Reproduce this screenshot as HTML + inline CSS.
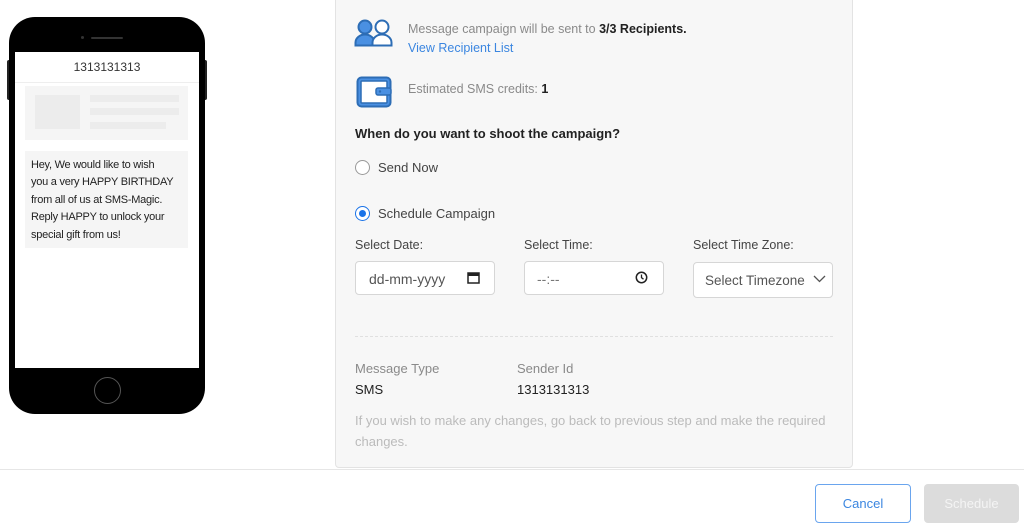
<!DOCTYPE html>
<html><head><meta charset="utf-8"><style>
*{box-sizing:border-box;margin:0;padding:0}
body{width:1024px;height:529px;background:#fff;font-family:"Liberation Sans",sans-serif;position:relative;overflow:hidden;color:#333}
.a{position:absolute}
.panel{left:335px;top:-2px;width:518px;height:470px;background:#f7f7f7;border:1px solid #e3e3e3;border-radius:0 0 4px 4px}
.g{color:#8a8a8a}
.box{position:absolute;height:34px;background:#fff;border:1px solid #d6d6d6;border-radius:4px;font-size:14px;color:#555}
.radio{position:absolute;width:15px;height:15px;border-radius:50%;border:1px solid #999;background:#fff}
</style></head><body>
<!-- phone -->
<div class="a" style="left:7px;top:60px;width:200px;height:40px;background:#222;border-radius:2px"></div>
<div class="a" style="left:9px;top:17px;width:196px;height:397px;background:#000;border-radius:26px"></div>
<div class="a" style="left:91px;top:37px;width:32px;height:2px;background:#333;border-radius:1px"></div>
<div class="a" style="left:81px;top:36px;width:3px;height:3px;background:#333;border-radius:50%"></div>
<div class="a" style="left:15px;top:52px;width:184px;height:316px;background:#fff"></div>
<div class="a" style="left:15px;top:52px;width:184px;height:31px;border-bottom:1px solid #eee;text-align:center;font-size:12px;line-height:31px;color:#333">1313131313</div>
<div class="a" style="left:25px;top:86px;width:163px;height:54px;background:#f5f5f5"></div>
<div class="a" style="left:35px;top:95px;width:45px;height:34px;background:#ececec"></div>
<div class="a" style="left:90px;top:95px;width:89px;height:7px;background:#ececec"></div>
<div class="a" style="left:90px;top:108px;width:89px;height:7px;background:#ececec"></div>
<div class="a" style="left:90px;top:122px;width:76px;height:7px;background:#ececec"></div>
<div class="a" style="left:25px;top:151px;width:163px;height:97px;background:#f5f5f5;padding:6px 4px 6px 6px;font-size:11px;letter-spacing:-0.25px;line-height:17.4px;color:#222;white-space:nowrap">Hey, We would like to wish<br>you a very HAPPY BIRTHDAY<br>from all of us at SMS-Magic.<br>Reply HAPPY to unlock your<br>special gift from us!</div>
<div class="a" style="left:94px;top:377px;width:27px;height:27px;border:1px solid #555;border-radius:50%"></div>
<!-- panel -->
<div class="a panel"></div>
<svg class="a" style="left:354px;top:19px" width="40" height="28" viewBox="0 0 40 28">
<path d="M1.5 26.5 v-3 a9.5 8 0 0 1 19 0 v3z" fill="#4a90e2" stroke="#2d6db5" stroke-width="2"/>
<circle cx="11" cy="8" r="6.5" fill="#4a90e2" stroke="#2d6db5" stroke-width="2"/>
<path d="M18.5 26.5 v-3 a9.5 8 0 0 1 19 0 v3z" fill="#fff" stroke="#2d6db5" stroke-width="2"/>
<circle cx="28" cy="8" r="6.5" fill="#fff" stroke="#2d6db5" stroke-width="2"/>
</svg>
<svg class="a" style="left:356px;top:76px" width="37" height="32" viewBox="0 0 37 32">
<rect x="1.5" y="1.5" width="33" height="29" rx="4" fill="#4a90e2" stroke="#2d6db5" stroke-width="2"/>
<rect x="5" y="5" width="26" height="22" rx="1" fill="#fff" stroke="#2d6db5" stroke-width="1.5"/>
<rect x="20" y="12" width="15" height="7" rx="2" fill="#4a90e2" stroke="#2d6db5" stroke-width="1.5"/>
<circle cx="24" cy="15.5" r="1.2" fill="#2d6db5"/>
</svg>
<div class="a g" style="left:408px;top:22px;font-size:12.5px">Message campaign will be sent to <b style="color:#222">3/3 Recipients.</b></div>
<div class="a" style="left:408px;top:41px;font-size:12.5px;color:#3b86e0">View Recipient List</div>
<div class="a g" style="left:408px;top:82px;font-size:12.5px">Estimated SMS credits: <b style="color:#222">1</b></div>
<div class="a" style="left:355px;top:126px;font-size:13px;font-weight:bold;color:#222">When do you want to shoot the campaign?</div>
<div class="radio" style="left:355px;top:160px"></div>
<div class="a" style="left:378px;top:160px;font-size:13px;color:#444">Send Now</div>
<div class="radio" style="left:355px;top:206px;border-color:#1a73e8"></div>
<div class="a" style="left:359px;top:210px;width:7px;height:7px;border-radius:50%;background:#1a73e8"></div>
<div class="a" style="left:378px;top:206px;font-size:13px;color:#444">Schedule Campaign</div>
<div class="a" style="left:355px;top:238px;font-size:12.5px;color:#444">Select Date:</div>
<div class="a" style="left:524px;top:238px;font-size:12.5px;color:#444">Select Time:</div>
<div class="a" style="left:693px;top:238px;font-size:12.5px;color:#444">Select Time Zone:</div>
<div class="box" style="left:355px;top:261px;width:140px;padding:9px 13px">dd-mm-yyyy</div>
<svg class="a" style="left:467px;top:271px" width="13" height="13"><rect x="1" y="2" width="11" height="10" fill="none" stroke="#222" stroke-width="1.5"/><rect x="1" y="2" width="11" height="3" fill="#222"/></svg>
<div class="box" style="left:524px;top:261px;width:140px;padding:9px 12px;color:#777">--:--</div>
<svg class="a" style="left:635px;top:271px" width="13" height="13"><circle cx="6.5" cy="6.5" r="5.2" fill="none" stroke="#222" stroke-width="1.5"/><path d="M6.5 3.5v3.2l2 1.5" fill="none" stroke="#222" stroke-width="1.3"/></svg>
<div class="box" style="left:693px;top:262px;width:140px;height:36px;padding:10px 11px;font-size:13.5px">Select Timezone</div>
<svg class="a" style="left:813px;top:275px" width="13" height="9"><path d="M1 1l5.5 5.5L12 1" fill="none" stroke="#555" stroke-width="1.3"/></svg>
<div class="a" style="left:355px;top:336px;width:478px;border-top:1px dashed #e0e0e0"></div>
<div class="a g" style="left:355px;top:361px;font-size:13px">Message Type</div>
<div class="a g" style="left:517px;top:361px;font-size:13px">Sender Id</div>
<div class="a" style="left:355px;top:382px;font-size:13px;color:#222">SMS</div>
<div class="a" style="left:517px;top:382px;font-size:13px;color:#222">1313131313</div>
<div class="a" style="left:355px;top:410px;width:480px;font-size:13px;line-height:21px;color:#bbb">If you wish to make any changes, go back to previous step and make the required changes.</div>
<!-- footer -->
<div class="a" style="left:0;top:469px;width:1024px;border-top:1px solid #e6e6e6"></div>
<div class="a" style="left:815px;top:484px;width:96px;height:39px;border:1px solid #6aa5ee;border-radius:4px;text-align:center;line-height:37px;font-size:13px;color:#3b86e0">Cancel</div>
<div class="a" style="left:924px;top:484px;width:95px;height:39px;background:#dcdcdc;border-radius:4px;text-align:center;line-height:39px;font-size:13px;color:#f4f4f4">Schedule</div>
</body></html>
